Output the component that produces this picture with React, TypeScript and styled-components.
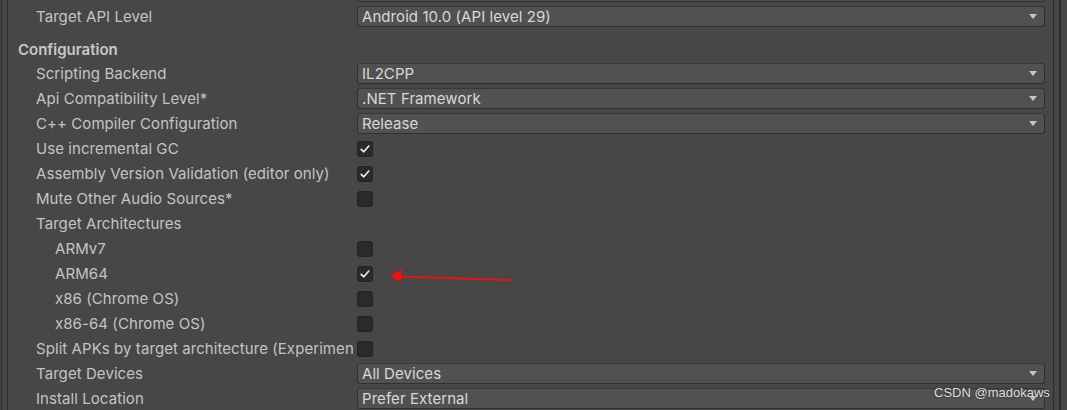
import React from 'react';
import styled, { createGlobalStyle } from 'styled-components';

const GlobalStyle = createGlobalStyle`
  html, body {
    margin: 0;
    padding: 0;
    background: #474747;
  }
  body {
    font-family: Inter, "Noto Sans", sans-serif;
  }
`;

const Page = styled.div`
  position: relative;
  display: flex;
  width: 1067px;
  height: 410px;
  overflow: hidden;
  background: #474747;
`;

const LeftGutter = styled.div`
  width: 5px;
  margin-left: 1px;
  border-left: 1px solid #2b2b2b;
  border-right: 1px solid #2b2b2b;
  flex-shrink: 0;
`;

const RightGutter = styled.div`
  width: 5px;
  margin-right: 6px;
  border-left: 1px solid #2b2b2b;
  border-right: 2px solid #2b2b2b;
  flex-shrink: 0;
`;

const Main = styled.div`
  flex: 1;
  display: flex;
  flex-direction: column;
  margin-top: -21px;
  padding-right: 8px;
  min-width: 0;
`;

const Row = styled.div`
  display: flex;
  align-items: center;
  height: 25px;
  flex-shrink: 0;
`;

const Label = styled.div<{ depth: number }>`
  width: 345px;
  padding-left: ${({ depth }) => (depth === 2 ? 47 : 28)}px;
  box-sizing: border-box;
  margin-right: 4px;
  flex-shrink: 0;
  color: #c4c4c4;
  font-size: 15px;
  letter-spacing: 0.07px;
  white-space: nowrap;
  overflow: hidden;
`;

const Header = styled.div`
  display: flex;
  align-items: center;
  height: 25px;
  box-sizing: border-box;
  margin-top: 7px;
  padding: 2px 0 0 10px;
  color: #c8c8c8;
  font-size: 15px;
  font-weight: 600;
  flex-shrink: 0;
`;

const Dropdown = styled.div`
  flex: 1;
  display: flex;
  align-items: center;
  justify-content: space-between;
  height: 21px;
  box-sizing: border-box;
  padding: 0 7px 0 4px;
  background: #515151;
  border: 1px solid #303030;
  border-top-color: #383838;
  border-radius: 3px;
  color: #d8d8d8;
  font-size: 15px;
  letter-spacing: 0.07px;
  white-space: nowrap;
`;

const Caret = styled.span`
  width: 0;
  height: 0;
  border-left: 4.5px solid transparent;
  border-right: 4.5px solid transparent;
  border-top: 5px solid #c4c4c4;
`;

const Box = styled.div`
  width: 16px;
  height: 16px;
  box-sizing: border-box;
  background: #2a2a2a;
  border: 1px solid #232323;
  border-radius: 3px;
  display: flex;
  align-items: center;
  justify-content: center;
`;

const Overlay = styled.svg`
  position: absolute;
  left: 0;
  top: 0;
  pointer-events: none;
`;

const Watermark = styled.div`
  position: absolute;
  left: 934px;
  top: 385px;
  font-family: "Liberation Sans", Arial, sans-serif;
  font-size: 13px;
  color: rgba(255, 255, 255, 0.85);
  text-shadow: 0 0 2px rgba(0, 0, 0, 0.6);
  white-space: nowrap;
`;

type Item =
  | { kind: 'dropdown'; label: string; value: string; depth?: number }
  | { kind: 'check'; label: string; checked: boolean; depth?: number }
  | { kind: 'label'; label: string; depth?: number }
  | { kind: 'header'; label: string };

// the first row is scrolled almost out of view, only its lower edge shows
const items: Item[] = [
  { kind: 'dropdown', label: '', value: '' },
  { kind: 'dropdown', label: 'Target API Level', value: 'Android 10.0 (API level 29)' },
  { kind: 'header', label: 'Configuration' },
  { kind: 'dropdown', label: 'Scripting Backend', value: 'IL2CPP' },
  { kind: 'dropdown', label: 'Api Compatibility Level*', value: '.NET Framework' },
  { kind: 'dropdown', label: 'C++ Compiler Configuration', value: 'Release' },
  { kind: 'check', label: 'Use incremental GC', checked: true },
  { kind: 'check', label: 'Assembly Version Validation (editor only)', checked: true },
  { kind: 'check', label: 'Mute Other Audio Sources*', checked: false },
  { kind: 'label', label: 'Target Architectures' },
  { kind: 'check', label: 'ARMv7', checked: false, depth: 2 },
  { kind: 'check', label: 'ARM64', checked: true, depth: 2 },
  { kind: 'check', label: 'x86 (Chrome OS)', checked: false, depth: 2 },
  { kind: 'check', label: 'x86-64 (Chrome OS)', checked: false, depth: 2 },
  { kind: 'check', label: 'Split APKs by target architecture (Experimental)', checked: false },
  { kind: 'dropdown', label: 'Target Devices', value: 'All Devices' },
  { kind: 'dropdown', label: 'Install Location', value: 'Prefer External' },
];

const CheckMark = () => (
  <svg width="12" height="12" viewBox="0 0 12 12">
    <path d="M2.2 6.3 L4.8 8.8 L9.8 3" fill="none" stroke="#f0f0f0" strokeWidth="1.6" strokeLinecap="round" strokeLinejoin="round" />
  </svg>
);

const Checkbox = (props: { checked: boolean }) => (
  <Box>{props.checked && <CheckMark />}</Box>
);

const App: React.FC = () => {
  const rows = items.map((item, index) => {
    if (item.kind === 'header') {
      return <Header key={index}>{item.label}</Header>;
    }
    return (
      <Row key={index}>
        <Label depth={item.depth ?? 1}>{item.label}</Label>
        {item.kind === 'dropdown' && (
          <Dropdown>
            <span>{item.value}</span>
            <Caret />
          </Dropdown>
        )}
        {item.kind === 'check' && <Checkbox checked={item.checked} />}
      </Row>
    );
  });

  return (
    <>
      <GlobalStyle />
      <Page>
        <LeftGutter />
        <Main>{rows}</Main>
        <RightGutter />
        <Overlay width="1067" height="410">
          <line x1="511" y1="280" x2="398" y2="276.5" stroke="#ee1111" strokeWidth="2" />
          <polygon points="390,275.5 402,269.5 401,282.5" fill="#ee1111" />
        </Overlay>
        <Watermark>CSDN @madokaws</Watermark>
      </Page>
    </>
  );
};

export default App;
